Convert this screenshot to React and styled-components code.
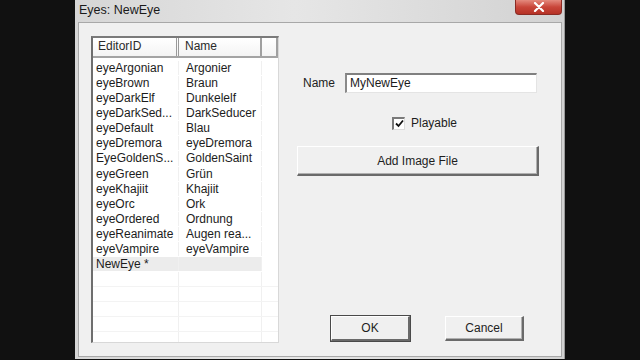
import styled, { createGlobalStyle } from 'styled-components'

const GlobalStyle = createGlobalStyle`
  html, body {
    margin: 0;
    padding: 0;
    background: #111111;
  }
  body {
    font-family: "Liberation Sans", Arial, sans-serif;
    font-size: 12px;
    color: #1c1c1c;
  }
`

const Screen = styled.div`
  width: 640px;
  height: 360px;
  display: flex;
  background: #111111;
  overflow: hidden;
`

const Window = styled.div`
  margin-left: 75px;
  width: 489px;
  height: 359px;
  display: flex;
  flex-direction: column;
  background: linear-gradient(90deg, #d6d6d6 0%, #e6e6e6 45%, #d2d2d2 100%);
  border-right: 1px solid #9a9a9a;
`

const TitleBar = styled.div`
  height: 23px;
  display: flex;
  justify-content: space-between;
  align-items: flex-start;
  padding-left: 4px;
`

const TitleText = styled.span`
  font-size: 12.5px;
  line-height: 21px;
  color: #1a1a1a;
`

const CloseButton = styled.div`
  width: 45px;
  height: 14px;
  margin-right: 2px;
  border: 1px solid #8a2b24;
  border-top: none;
  border-radius: 0 0 4px 4px;
  background: linear-gradient(180deg, #e48a7e 0%, #c9463a 50%, #b53226 100%);
  display: flex;
  align-items: center;
  justify-content: center;
`

const Client = styled.div`
  flex: 1;
  margin: 0 2px 2px 3px;
  border: 1px solid #a8a8a8;
  background: #f0f0f0;
  display: flex;
  padding: 13px 0 13px 12px;
  gap: 18px;
`

const ListBox = styled.div`
  width: 185px;
  height: 304px;
  background: #ffffff;
  border-top: 2px solid #7a7a7a;
  border-left: 2px solid #6e6e6e;
  border-right: 1px solid #d8d8d8;
  border-bottom: 1px solid #d8d8d8;
  display: flex;
  flex-direction: column;
  overflow: hidden;
`

const ListRow = styled.div`
  display: grid;
  grid-template-columns: 86px 83px 1fr;
  flex: none;
  height: 15.08px;
  line-height: 15px;
  background: ${(p) => (p.selected ? '#ececec' : 'transparent')};
  border-bottom: 1px solid ${(p) => (p.empty ? '#f3f3f3' : 'transparent')};
  box-sizing: border-box;
`

const HeaderRow = styled.div`
  display: grid;
  grid-template-columns: 86px 83px 1fr;
  flex: none;
  height: 18px;
  background: linear-gradient(180deg, #ffffff 0%, #f4f4f4 100%);
  border-bottom: 2px solid #a4a4a4;
  margin-bottom: 3px;
`

const HeaderCell = styled.div`
  padding-left: ${(p) => p.pad}px;
  line-height: 17px;
  color: #2a2a2a;
  border-right: ${(p) => (p.double ? '3px double #9a9a9a' : '2px solid #a0a0a0')};
  white-space: nowrap;
  overflow: hidden;
`

const Cell = styled.div`
  padding-left: ${(p) => p.pad}px;
  white-space: nowrap;
  overflow: hidden;
  border-right: 1px solid ${(p) => (p.line ? '#f0f0f0' : 'transparent')};
  background: ${(p) => (p.hl ? '#ececec' : 'transparent')};
`

const RightPane = styled.div`
  width: 242px;
  display: flex;
  flex-direction: column;
`

const NameRow = styled.div`
  display: flex;
  align-items: center;
  margin-top: 37px;
  padding-left: 6px;
  height: 20px;
`

const Label = styled.span`
  width: 42px;
  color: #222;
`

const TextInput = styled.div`
  width: 186px;
  height: 17px;
  line-height: 17px;
  padding-left: 3px;
  background: #ffffff;
  border-top: 2px solid #808080;
  border-left: 2px solid #8a8a8a;
  border-right: 1px solid #e4e4e4;
  border-bottom: 1px solid #e4e4e4;
`

const CheckRow = styled.div`
  display: flex;
  align-items: center;
  gap: 6px;
  margin-top: 23px;
  padding-left: 95px;
`

const CheckBox = styled.div`
  width: 10px;
  height: 10px;
  background: #fff;
  border-top: 2px solid #7a7a7a;
  border-left: 2px solid #7a7a7a;
  border-right: 1px solid #dcdcdc;
  border-bottom: 1px solid #dcdcdc;
  display: flex;
  align-items: center;
  justify-content: center;
`

const Button = styled.div`
  box-sizing: border-box;
  width: ${(p) => p.w}px;
  height: ${(p) => p.h}px;
  display: flex;
  align-items: center;
  justify-content: center;
  background: #f0f0f0;
  border-top: 1px solid #ffffff;
  border-left: 1px solid #ffffff;
  border-right: 2px solid #6a6a6a;
  border-bottom: 2px solid #6a6a6a;
  box-shadow: ${(p) => (p.def ? '0 0 0 1px #4a4a4a' : 'inset -1px -1px 0 #b0b0b0')};
  color: #1e1e1e;
`

const WideButton = styled(Button)`
  margin-top: 16px;
`

const Footer = styled.div`
  margin-top: auto;
  margin-bottom: 2px;
  display: flex;
  justify-content: flex-end;
  gap: 35px;
  padding-right: 15px;
`

const rows = [
  ['eyeArgonian', 'Argonier'],
  ['eyeBrown', 'Braun'],
  ['eyeDarkElf', 'Dunkelelf'],
  ['eyeDarkSed...', 'DarkSeducer'],
  ['eyeDefault', 'Blau'],
  ['eyeDremora', 'eyeDremora'],
  ['EyeGoldenS...', 'GoldenSaint'],
  ['eyeGreen', 'Grün'],
  ['eyeKhajiit', 'Khajiit'],
  ['eyeOrc', 'Ork'],
  ['eyeOrdered', 'Ordnung'],
  ['eyeReanimate', 'Augen rea...'],
  ['eyeVampire', 'eyeVampire'],
]

export default function App() {
  return (
    <>
      <GlobalStyle />
      <Screen>
        <Window>
          <TitleBar>
            <TitleText>Eyes: NewEye</TitleText>
            <CloseButton>
              <svg width="12" height="10" viewBox="0 0 12 10">
                <path d="M2 1 L10 9 M10 1 L2 9" stroke="#ffffff" strokeWidth="2.2" strokeLinecap="round" />
              </svg>
            </CloseButton>
          </TitleBar>
          <Client>
            <ListBox>
              <HeaderRow>
                <HeaderCell pad={5} double>EditorID</HeaderCell>
                <HeaderCell pad={6}>Name</HeaderCell>
                <HeaderCell pad={0} />
              </HeaderRow>
              {rows.map(([id, name]) => (
                <ListRow key={id}>
                  <Cell pad={3} line>{id}</Cell>
                  <Cell pad={7} line>{name}</Cell>
                  <Cell pad={0} />
                </ListRow>
              ))}
              <ListRow>
                <Cell pad={3} hl line>NewEye *</Cell>
                <Cell pad={7} hl line />
                <Cell pad={0} />
              </ListRow>
              {[0, 1, 2, 3, 4].map((i) => (
                <ListRow key={i} empty>
                  <Cell pad={3} line />
                  <Cell pad={7} line />
                  <Cell pad={0} />
                </ListRow>
              ))}
            </ListBox>
            <RightPane>
              <NameRow>
                <Label>Name</Label>
                <TextInput>MyNewEye</TextInput>
              </NameRow>
              <CheckRow>
                <CheckBox>
                  <svg width="9" height="9" viewBox="0 0 9 9">
                    <path d="M1 4.5 L3.5 7 L8 1.5" fill="none" stroke="#111" strokeWidth="1.8" />
                  </svg>
                </CheckBox>
                <span>Playable</span>
              </CheckRow>
              <WideButton w={242} h={30}>Add Image File</WideButton>
              <Footer>
                <Button w={79} h={25} def>OK</Button>
                <Button w={79} h={25}>Cancel</Button>
              </Footer>
            </RightPane>
          </Client>
        </Window>
      </Screen>
    </>
  )
}
